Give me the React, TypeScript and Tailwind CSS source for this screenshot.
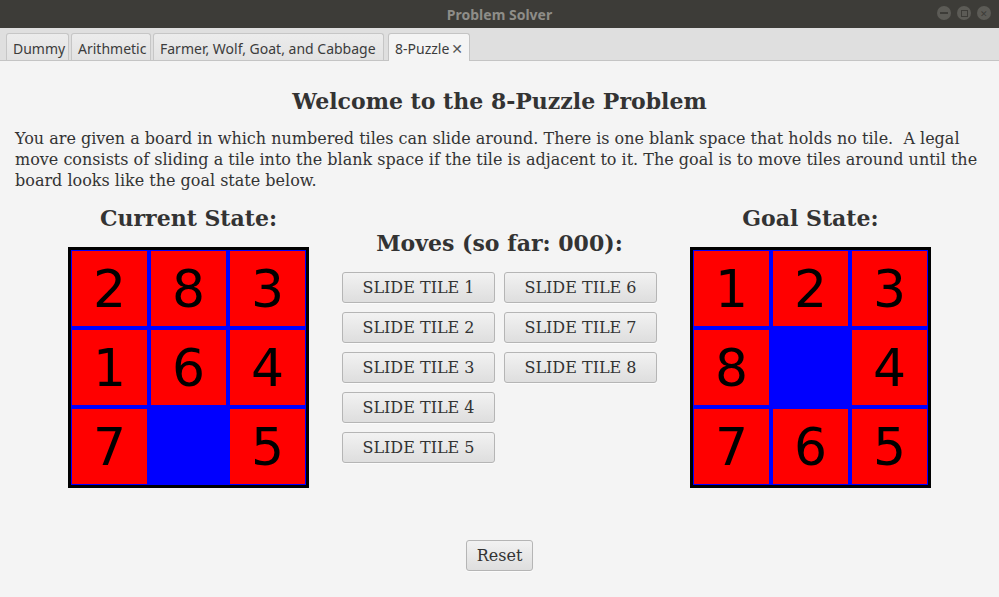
import { useState } from "react";

const serif = { fontFamily: '"DejaVu Serif", "Liberation Serif", serif' };
const sans = { fontFamily: '"DejaVu Sans", "Noto Sans", sans-serif' };
const ui = { fontFamily: '"Noto Sans", "DejaVu Sans", sans-serif' };

const GOAL = [1, 2, 3, 8, 0, 4, 7, 6, 5];
const START = [2, 8, 3, 1, 6, 4, 7, 0, 5];

const Board = ({ tiles }: { tiles: number[] }) => (
  <div className="grid grid-cols-3 gap-1 border-[3px] border-black bg-[#0000ff] p-px w-[241px]">
    {tiles.map((t, i) => (
      <div
        key={i}
        className={`h-[75px] flex items-center justify-center text-[52px] leading-none text-black ${
          t === 0 ? "bg-[#0000ff]" : "bg-[#ff0000]"
        }`}
        style={sans}
      >
        {t === 0 ? "" : t}
      </div>
    ))}
  </div>
);

const FxButton = ({
  children,
  className = "",
  onClick,
}: {
  children: React.ReactNode;
  className?: string;
  onClick?: () => void;
}) => (
  <button
    onClick={onClick}
    className={`h-[31px] rounded-[3px] border border-[#b5b5b5] bg-gradient-to-b from-[#f2f2f2] to-[#dedede] text-[16px] text-[#333333] shadow-[0_1px_0_rgba(255,255,255,0.6)] ${className}`}
    style={serif}
  >
    {children}
  </button>
);

const Tab = ({
  label,
  width,
  active,
}: {
  label: string;
  width: string;
  active?: boolean;
}) => (
  <div
    className={`h-[27px] ${width} flex items-center pt-[2px] px-[6px] rounded-t-[3px] border border-b-0 text-[14px] text-[#3c3c3c] ${
      active
        ? "bg-[#f4f4f4] border-[#c4c4c4] h-[28px] -mb-px"
        : "bg-gradient-to-b from-[#ececec] to-[#e2e2e2] border-[#c6c6c6]"
    }`}
    style={ui}
  >
    <span className="whitespace-nowrap">{label}</span>
    {active && <span className="ml-auto text-[14px] text-[#555]">✕</span>}
  </div>
);

export default function App() {
  const [board, setBoard] = useState(START);
  const [moves, setMoves] = useState(0);

  const slide = (n: number) => {
    const i = board.indexOf(n);
    const b = board.indexOf(0);
    const adj =
      (Math.abs(i - b) === 1 && Math.floor(i / 3) === Math.floor(b / 3)) ||
      Math.abs(i - b) === 3;
    if (!adj) return;
    const next = [...board];
    next[b] = n;
    next[i] = 0;
    setBoard(next);
    setMoves(moves + 1);
  };

  return (
    <div className="w-[999px] h-[597px] bg-[#f4f4f4] flex flex-col overflow-hidden">
      {/* title bar */}
      <div className="h-[28px] bg-[#3d3c38] relative flex items-center justify-center shrink-0">
        <span className="text-[14px] font-bold text-[#8e8d88]" style={ui}>
          Problem Solver
        </span>
        <div className="absolute right-[8px] top-[6px] flex gap-[6px]">
          <span className="size-[14px] rounded-full bg-[#5c5b56] flex items-center justify-center">
            <span className="w-[8px] h-[2px] bg-[#3d3c38]" />
          </span>
          <span className="size-[14px] rounded-full bg-[#5c5b56] flex items-center justify-center">
            <span className="size-[7px] border-[1.5px] border-[#3d3c38]" />
          </span>
          <span className="size-[14px] rounded-full bg-[#5c5b56] flex items-center justify-center text-[9px] leading-none text-[#3d3c38]">
            ✕
          </span>
        </div>
      </div>

      {/* tab bar */}
      <div className="h-[33px] bg-[#dfdfdf] border-b border-[#c4c4c4] flex items-end gap-[2px] pl-[6px] shrink-0">
        <Tab label="Dummy" width="w-[63px]" />
        <Tab label="Arithmetic" width="w-[80px]" />
        <Tab label="Farmer, Wolf, Goat, and Cabbage" width="w-[231px]" />
        <Tab label="8-Puzzle" width="w-[82px] ml-[2px]" active />
      </div>

      {/* content */}
      <div className="flex flex-col text-[#333333]" style={serif}>
        <h1 className="mt-[27px] text-center text-[22px] leading-[26px] font-bold">
          Welcome to the 8-Puzzle Problem
        </h1>
        <p className="mt-[14px] px-[15px] text-[16px] leading-[21px]">
          You are given a board in which numbered tiles can slide around. There
          is one blank space that holds no tile.&nbsp; A legal move consists of
          sliding a tile into the blank space if the tile is adjacent to it. The
          goal is to move tiles around until the board looks like the goal state
          below.
        </p>

        <div className="mt-[15px] flex items-center justify-center gap-[33px]">
          <div className="flex flex-col items-center w-[241px]">
            <h2 className="text-[22px] leading-[24px] font-bold">Current State:</h2>
            <div className="mt-[17px]">
              <Board tiles={board} />
            </div>
          </div>

          <div className="flex flex-col items-center w-[315px]">
            <h2 className="text-[22px] leading-[24px] font-bold">
              Moves (so far: {String(moves).padStart(3, "0")}):
            </h2>
            <div className="mt-[17px] grid grid-cols-2 grid-flow-col grid-rows-5 gap-x-[9px] gap-y-[9px]">
              {[1, 2, 3, 4, 5, 6, 7, 8].map((n) => (
                <FxButton key={n} className="w-[153px]" onClick={() => slide(n)}>
                  SLIDE TILE {n}
                </FxButton>
              ))}
            </div>
          </div>

          <div className="flex flex-col items-center w-[241px]">
            <h2 className="text-[22px] leading-[24px] font-bold">Goal State:</h2>
            <div className="mt-[17px]">
              <Board tiles={GOAL} />
            </div>
          </div>
        </div>

        <div className="mt-[52px] flex justify-center">
          <FxButton
            className="w-[67px]"
            onClick={() => {
              setBoard(START);
              setMoves(0);
            }}
          >
            Reset
          </FxButton>
        </div>
      </div>
    </div>
  );
}
